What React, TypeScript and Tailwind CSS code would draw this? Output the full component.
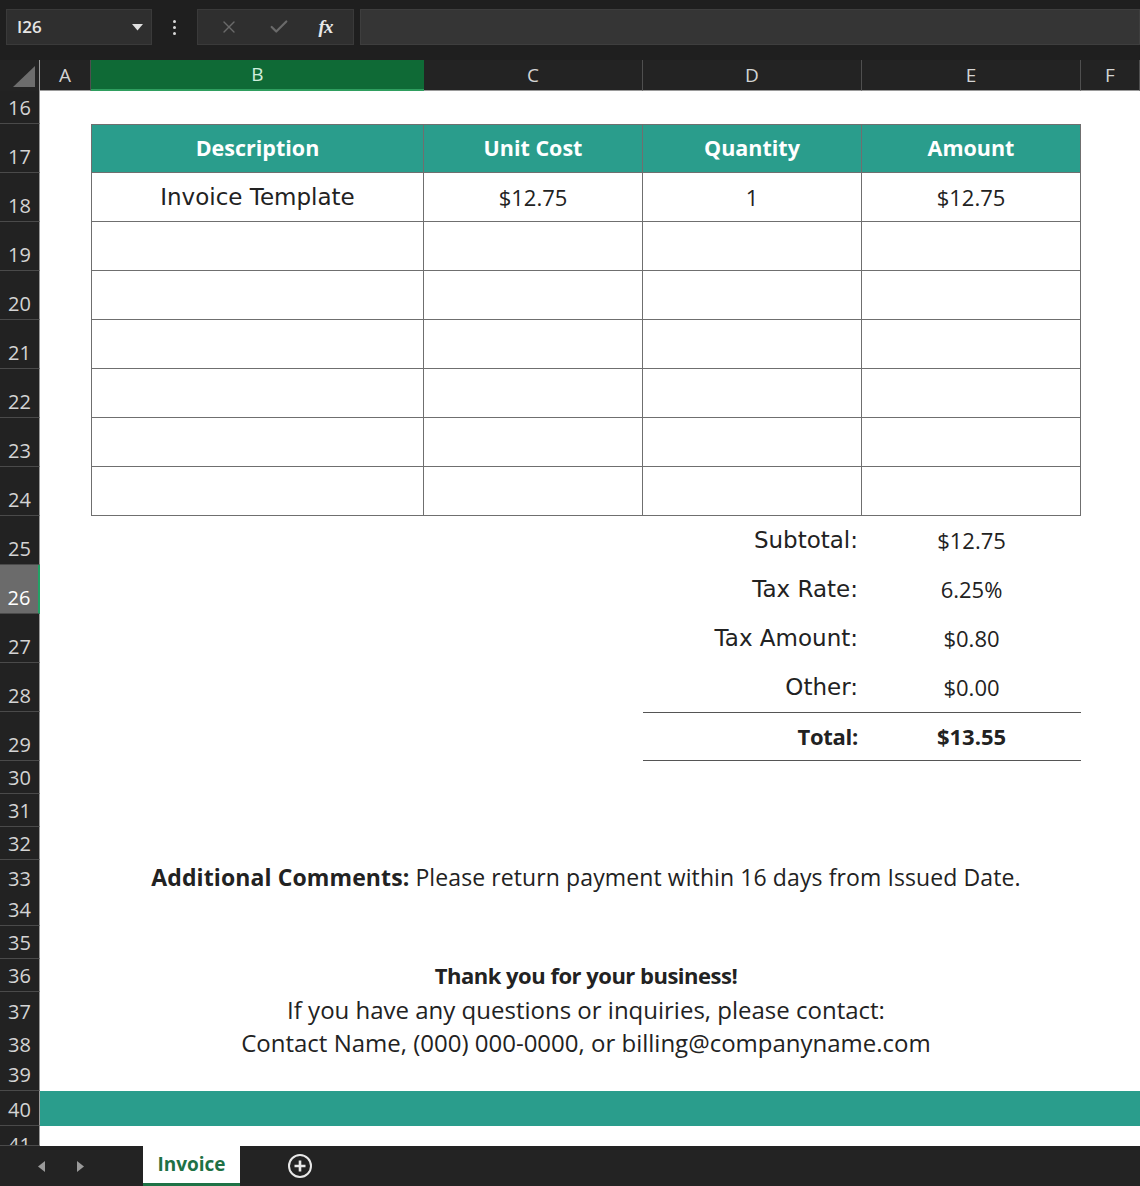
import React from "react";
import { X, Check } from "lucide-react";

const GRID = "grid grid-cols-[40px_51px_333px_219px_219px_219px_59px]";
const DEJA = "font-['DejaVu_Sans',sans-serif]";
const OPEN = "font-['Open_Sans',sans-serif]";

type Row = { n: number; h: string; kind: string; label?: string; value?: string };

const rows: Row[] = [
  { n: 16, h: "h-[33px]", kind: "blank" },
  { n: 17, h: "h-[49px]", kind: "head" },
  { n: 18, h: "h-[49px]", kind: "item" },
  { n: 19, h: "h-[49px]", kind: "empty" },
  { n: 20, h: "h-[49px]", kind: "empty" },
  { n: 21, h: "h-[49px]", kind: "empty" },
  { n: 22, h: "h-[49px]", kind: "empty" },
  { n: 23, h: "h-[49px]", kind: "empty" },
  { n: 24, h: "h-[49px]", kind: "empty" },
  { n: 25, h: "h-[49px]", kind: "sum", label: "Subtotal:", value: "$12.75" },
  { n: 26, h: "h-[49px]", kind: "sum", label: "Tax Rate:", value: "6.25%" },
  { n: 27, h: "h-[49px]", kind: "sum", label: "Tax Amount:", value: "$0.80" },
  { n: 28, h: "h-[49px]", kind: "sum", label: "Other:", value: "$0.00" },
  { n: 29, h: "h-[49px]", kind: "total" },
  { n: 30, h: "h-[33px]", kind: "blank" },
  { n: 31, h: "h-[33px]", kind: "blank" },
  { n: 32, h: "h-[33px]", kind: "blank" },
  { n: 33, h: "h-[33px]", kind: "comment" },
  { n: 34, h: "h-[33px]", kind: "blank" },
  { n: 35, h: "h-[33px]", kind: "blank" },
  { n: 36, h: "h-[33px]", kind: "thanks" },
  { n: 37, h: "h-[33px]", kind: "questions" },
  { n: 38, h: "h-[33px]", kind: "contact" },
  { n: 39, h: "h-[33px]", kind: "blank" },
  { n: 40, h: "h-[35px]", kind: "teal" },
  { n: 41, h: "h-[20px]", kind: "blank" },
];

function RowHeader({ n }: { n: number }) {
  const sel = n === 26;
  return (
    <div
      className={`flex items-end justify-center pb-[4px] border-b border-[#4a4a4a] overflow-hidden ${
        sel ? "bg-[#6b6b6b] text-white border-r-2 border-r-[#21a366]" : "bg-[#222222] text-[#d4d4d4] border-r border-r-[#9a9a9a]"
      } ${n === 41 ? "items-start pt-[8px] pb-0" : ""}`}
    >
      <span className={`text-[20px] leading-[22px] ${OPEN}`}>{n}</span>
    </div>
  );
}

function SheetRow({ r }: { r: Row }) {
  const cell = "border-r border-b border-[#6f6f6f]";
  let content: React.ReactNode = null;
  if (r.kind === "head") {
    content = (
      <>
        <div />
        {["Description", "Unit Cost", "Quantity", "Amount"].map((t, i) => (
          <div
            key={t}
            className={`bg-[#2a9d8c] border-t border-[#6f6f6f] ${cell} ${i === 0 ? "border-l" : ""} flex items-center justify-center text-white font-bold text-[21.5px] ${OPEN}`}
          >
            {t}
          </div>
        ))}
        <div />
      </>
    );
  } else if (r.kind === "item" || r.kind === "empty") {
    const vals = r.kind === "item" ? ["Invoice Template", "$12.75", "1", "$12.75"] : ["", "", "", ""];
    content = (
      <>
        <div />
        {vals.map((t, i) => (
          <div
            key={i}
            className={`${cell} ${i === 0 ? "border-l" : ""} flex items-center justify-center text-[#222] ${
              i === 0 ? `${DEJA} text-[23px]` : `${OPEN} text-[22px]`
            }`}
          >
            {t}
          </div>
        ))}
        <div />
      </>
    );
  } else if (r.kind === "sum") {
    content = (
      <>
        <div />
        <div />
        <div />
        <div className={`flex items-center justify-end pr-[4px] text-[#222] text-[23px] ${DEJA}`}>{r.label}</div>
        <div className={`flex items-center justify-center text-[#222] text-[22px] ${OPEN}`}>{r.value}</div>
        <div />
      </>
    );
  } else if (r.kind === "total") {
    content = (
      <>
        <div />
        <div />
        <div />
        <div className={`border-t border-b border-[#555] flex items-center justify-end pr-[4px] text-[#222] font-bold text-[22px] tracking-[-0.3px] ${OPEN}`}>
          Total:
        </div>
        <div className={`border-t border-b border-[#555] flex items-center justify-center text-[#222] font-bold text-[22px] ${OPEN}`}>
          $13.55
        </div>
        <div />
      </>
    );
  } else if (r.kind === "comment") {
    content = (
      <>
        <div />
        <div className={`col-span-4 flex items-center justify-center text-[#222] text-[23px] tracking-[0.1px] whitespace-nowrap ${OPEN}`}>
          <span className="font-bold">Additional Comments:</span>
          <span>&nbsp;Please return payment within 16 days from Issued Date.</span>
        </div>
        <div />
      </>
    );
  } else if (r.kind === "thanks") {
    content = (
      <>
        <div />
        <div className={`col-span-4 flex items-center justify-center text-[#222] text-[22px] tracking-[-0.5px] whitespace-nowrap font-bold ${OPEN}`}>
          Thank you for your business!
        </div>
        <div />
      </>
    );
  } else if (r.kind === "questions" || r.kind === "contact") {
    const text =
      r.kind === "questions"
        ? "If you have any questions or inquiries, please contact:"
        : "Contact Name, (000) 000-0000, or billing@companyname.com";
    content = (
      <>
        <div />
        <div className={`col-span-4 flex items-center justify-center text-[#222] text-[24px] whitespace-nowrap ${OPEN}`}>
          {text}
        </div>
        <div />
      </>
    );
  } else if (r.kind === "teal") {
    content = <div className="col-span-6 bg-[#2a9d8c]" />;
  } else {
    content = <div className="col-span-6" />;
  }
  return (
    <div className={`${GRID} ${r.h}`}>
      <RowHeader n={r.n} />
      {content}
    </div>
  );
}

export default function App() {
  const cols = [
    { l: "A", sel: false },
    { l: "B", sel: true },
    { l: "C", sel: false },
    { l: "D", sel: false },
    { l: "E", sel: false },
    { l: "F", sel: false },
  ];
  return (
    <div className={`w-[1140px] h-[1186px] overflow-hidden bg-white flex flex-col ${OPEN}`}>
      {/* formula bar */}
      <div className="h-[60px] bg-[#1f1f1f] flex items-start pt-[9px] pl-[6px] gap-0">
        <div className="w-[146px] h-[36px] bg-[#2f2f2f] border border-[#3a3a3a] flex items-center justify-between pl-[10px] pr-[8px]">
          <span className="text-[#e6e6e6] text-[17px] font-semibold">I26</span>
          <svg width="11" height="7" viewBox="0 0 11 7">
            <path d="M0 0 L11 0 L5.5 6.5 Z" fill="#e0e0e0" />
          </svg>
        </div>
        <div className="w-[45px] h-[36px] flex flex-col items-center justify-center gap-[3px]">
          <div className="w-[3px] h-[3px] rounded-full bg-[#d8d8d8]" />
          <div className="w-[3px] h-[3px] rounded-full bg-[#d8d8d8]" />
          <div className="w-[3px] h-[3px] rounded-full bg-[#d8d8d8]" />
        </div>
        <div className="w-[157px] h-[36px] bg-[#2f2f2f] border border-[#3a3a3a] flex items-center justify-around px-[6px]">
          <X size={20} strokeWidth={1.6} color="#6a6a6a" />
          <Check size={22} strokeWidth={2.4} color="#6a6a6a" />
          <span className="text-[#e8e8e8] text-[19px] italic font-bold font-['Liberation_Serif',serif] tracking-[-1px]">fx</span>
        </div>
        <div className="ml-[6px] flex-1 h-[36px] bg-[#353535] border border-[#3e3e3e]" />
      </div>
      {/* column header */}
      <div className={`${GRID} h-[31px] bg-[#232323]`}>
        <div className="flex items-end justify-end pr-[4px] pb-[4px] border-r border-[#9a9a9a]">
          <svg width="22" height="21" viewBox="0 0 22 21">
            <path d="M22 0 L22 21 L0 21 Z" fill="#6d6d6d" />
          </svg>
        </div>
        {cols.map((c) => (
          <div
            key={c.l}
            className={`flex items-center justify-center text-[19px] ${
              c.sel
                ? "bg-[#0f6a36] text-[#cfeedd] border-b-2 border-[#2f9e5f]"
                : "text-[#d4d4d4] border-r border-[#4f4f4f] border-b border-b-[#9a9a9a]"
            }`}
          >
            {c.l}
          </div>
        ))}
      </div>
      {/* sheet */}
      <div className="flex flex-col">
        {rows.map((r) => (
          <SheetRow key={r.n} r={r} />
        ))}
      </div>
      {/* bottom bar */}
      <div className="h-[40px] bg-[#232323] flex items-stretch">
        <div className="w-[143px] flex items-center">
          <svg width="7" height="11" viewBox="0 0 7 11" className="ml-[38px]">
            <path d="M7 0 L7 11 L0 5.5 Z" fill="#9a9a9a" />
          </svg>
          <svg width="7" height="11" viewBox="0 0 7 11" className="ml-[32px]">
            <path d="M0 0 L0 11 L7 5.5 Z" fill="#9a9a9a" />
          </svg>
        </div>
        <div className="w-[97px] bg-white border-b-[3px] border-[#1e7145] flex items-center justify-center">
          <span className="text-[#1e7145] font-bold text-[19px]">Invoice</span>
        </div>
        <div className="w-[120px] flex items-center justify-center">
          <svg width="26" height="26" viewBox="0 0 26 26">
            <circle cx="13" cy="13" r="11" fill="none" stroke="#e8e8e8" strokeWidth="2" />
            <path d="M13 7.5 V18.5 M7.5 13 H18.5" stroke="#e8e8e8" strokeWidth="2.6" />
          </svg>
        </div>
      </div>
    </div>
  );
}
